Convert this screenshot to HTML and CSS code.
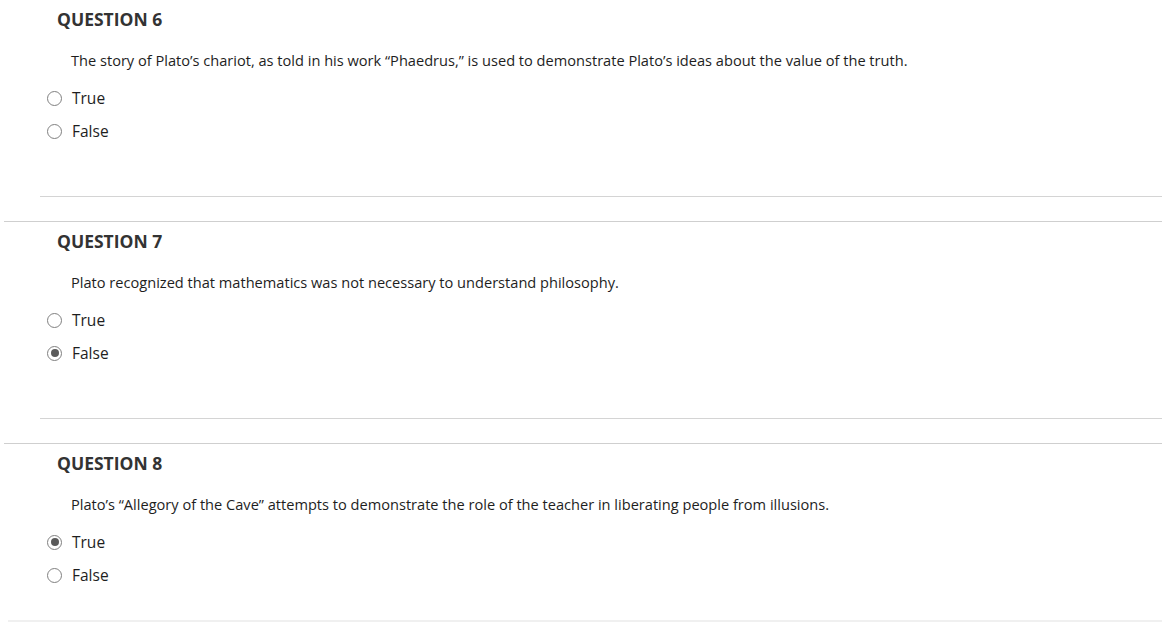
FILE: index.html
```html
<!DOCTYPE html>
<html>
<head>
<meta charset="utf-8">
<link rel="stylesheet" href="styles.css">
</head>
<body>
<div class="question">
  <div class="inner">
    <h2 class="title">QUESTION 6</h2>
    <p class="text">The story of Plato’s chariot, as told in his work “Phaedrus,” is used to demonstrate Plato’s ideas about the value of the truth.</p>
    <ul class="options">
      <li class="option"><span class="radio"></span><span class="label">True</span></li>
      <li class="option"><span class="radio"></span><span class="label">False</span></li>
    </ul>
  </div>
</div>
<div class="question">
  <div class="inner">
    <h2 class="title">QUESTION 7</h2>
    <p class="text">Plato recognized that mathematics was not necessary to understand philosophy.</p>
    <ul class="options">
      <li class="option"><span class="radio"></span><span class="label">True</span></li>
      <li class="option"><span class="radio checked"></span><span class="label">False</span></li>
    </ul>
  </div>
</div>
<div class="question last">
  <div class="inner">
    <h2 class="title">QUESTION 8</h2>
    <p class="text">Plato’s “Allegory of the Cave” attempts to demonstrate the role of the teacher in liberating people from illusions.</p>
    <ul class="options">
      <li class="option"><span class="radio checked"></span><span class="label">True</span></li>
      <li class="option"><span class="radio"></span><span class="label">False</span></li>
    </ul>
  </div>
</div>
</body>
</html>
```
FILE: styles.css
```css
html, body {
  margin: 0;
  padding: 0;
  background: #fff;
}
body {
  font-family: "Open Sans", "Noto Sans", sans-serif;
  color: #222;
  overflow: hidden;
}
.question {
  margin-left: 4px;
  border-bottom: 1px solid #cfcfcf;
  height: 222px;
  box-sizing: border-box;
}
.question .inner {
  margin-left: 36px;
  height: 197px;
  box-sizing: border-box;
  border-bottom: 1px solid #d4d4d4;
  padding-top: 7px;
}
.question.last {
  margin-left: 8px;
  border-bottom: 2px solid #f0f0f0;
  height: 178px;
}
.question.last .inner {
  margin-left: 32px;
  border-bottom: none;
  height: auto;
}
.title {
  margin: 0 0 0 17px;
  font-size: 17.5px;
  font-weight: 700;
  line-height: 24px;
  color: #333;
}
.text {
  margin: 20px 0 0 31px;
  font-size: 14.6px;
  line-height: 18px;
  color: #1e1e1e;
}
.options {
  list-style: none;
  margin: 18px 0 0 0;
  padding: 0;
}
.option {
  display: flex;
  align-items: center;
  height: 22px;
  margin-bottom: 11px;
}
.radio {
  width: 13px;
  height: 13px;
  border: 1px solid #808080;
  border-radius: 50%;
  margin-left: 7px;
  box-sizing: content-box;
  position: relative;
  background: #fff;
}
.radio.checked::after {
  content: "";
  position: absolute;
  left: 2.5px;
  top: 2.5px;
  width: 8px;
  height: 8px;
  border-radius: 50%;
  background: #5a5a5a;
}
.label {
  margin-left: 10px;
  font-size: 15.5px;
  color: #1e1e1e;
}
```
